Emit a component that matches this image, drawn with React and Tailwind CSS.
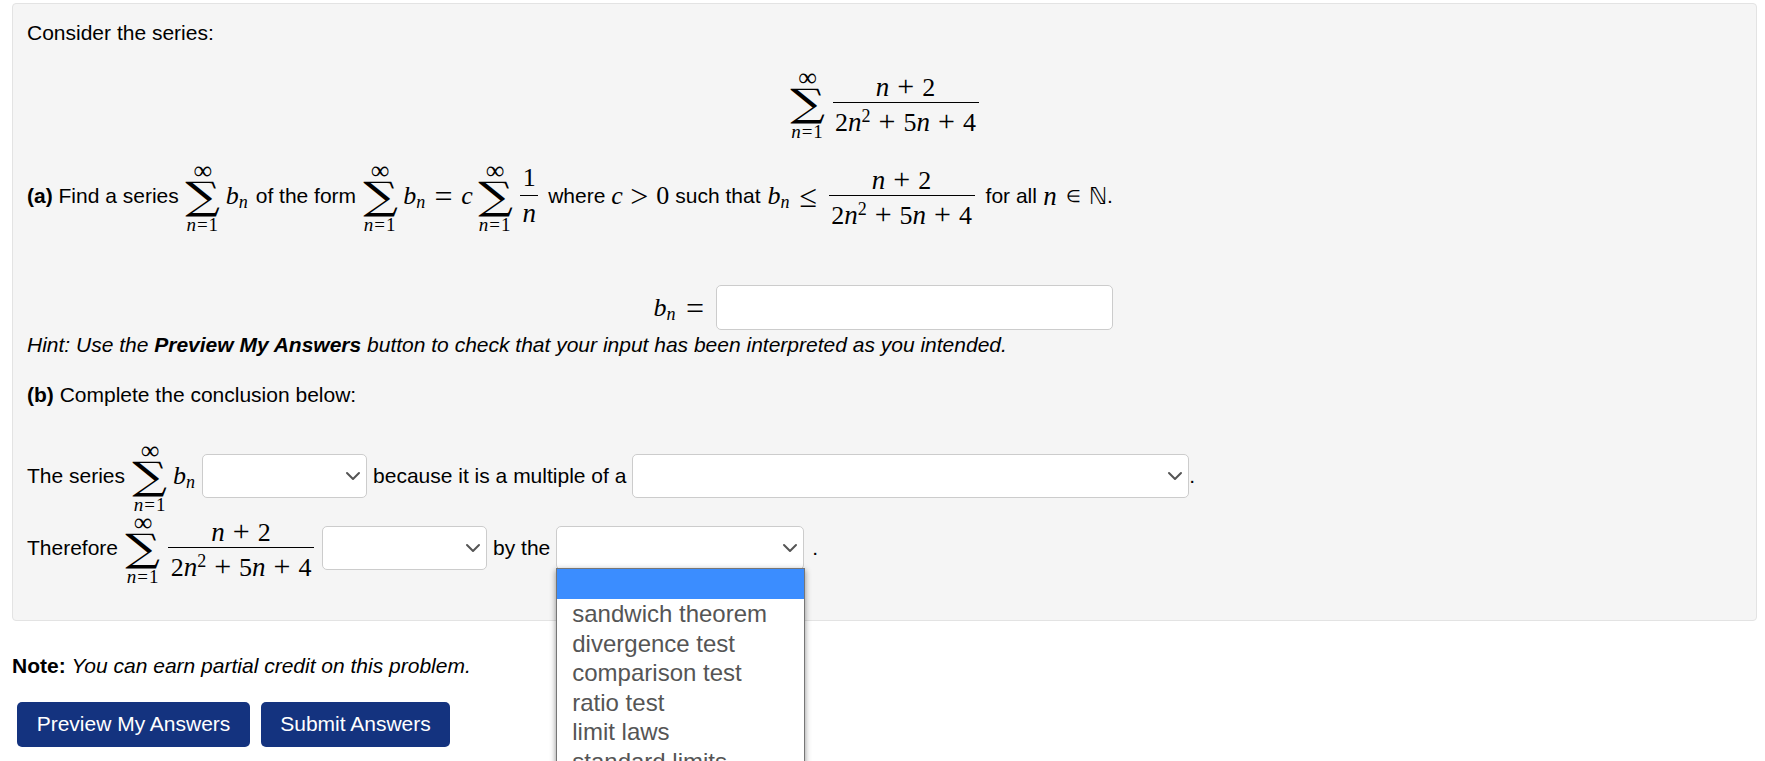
import React from 'react';
import { ChevronDown } from 'lucide-react';

const mathFont = "font-['Liberation_Serif',serif]";

// fixed width math symbol, so the row keeps TeX spacing
const Sym = ({ children, className = '' }) => (
  <span className={`${mathFont} inline-block text-center leading-none ${className}`}>{children}</span>
);

// big sum with limits
const Sum = ({ className = '' }) => (
  <span className={`${mathFont} inline-flex flex-col items-center shrink-0 w-[34px] h-[70px] text-black ${className}`}>
    <span className="h-[20px] text-[26px] leading-[20px]">∞</span>
    <span className="inline-block h-[38px] text-[38px] leading-[31px] scale-x-[1.28] font-['DejaVu_Serif',serif]">∑</span>
    <span className="h-[12px] text-[19px] leading-[12px] tracking-[1px] whitespace-nowrap">
      <i>n</i>=1
    </span>
  </span>
);

const Bn = ({ className = '' }) => (
  <span className={`${mathFont} inline-block w-[21px] text-[26px] leading-none whitespace-nowrap ${className}`}>
    <i>b</i>
    <i className="text-[18px] relative top-[4px]">n</i>
  </span>
);

const Frac = ({ top, bottom, className = '' }) => (
  <span className={`${mathFont} inline-flex flex-col items-center shrink-0 text-[26px] leading-[28px] ${className}`}>
    <span className="whitespace-nowrap h-[31px]">{top}</span>
    <span className="w-full h-px bg-black" />
    <span className="whitespace-nowrap h-[32px] pt-[3px]">{bottom}</span>
  </span>
);

const N = () => <i className="text-[27px]">n</i>;

const Plus = ({ className = 'mx-[8px]' }) => (
  <span className={`text-[30px] leading-none ${className}`}>+</span>
);

const LongFrac = ({ className = '' }) => (
  <Frac
    className={`w-[146px] ${className}`}
    top={
      <>
        <N />
        <Plus />2
      </>
    }
    bottom={
      <>
        2<N />
        <sup className="text-[18px] top-[-9px] leading-none">2</sup>
        <Plus />5<N />
        <Plus />4
      </>
    }
  />
);

const Select = ({ className = '' }) => (
  <span className={`inline-flex items-center justify-end shrink-0 h-[44px] bg-white border border-[#ccc] rounded-[5px] pr-[1px] ${className}`}>
    <ChevronDown size={24} strokeWidth={2} className="text-[#555]" />
  </span>
);

const OPTIONS = ['sandwich theorem', 'divergence test', 'comparison test', 'ratio test', 'limit laws', 'standard limits'];

export default function App() {
  return (
    <div className="relative h-[761px] w-[1765px] overflow-hidden bg-white text-[21px] leading-[28px] text-black font-['Liberation_Sans',Arial,sans-serif]">
      <div className="pl-3 pr-2 pt-[3px]">
        {/* problem panel */}
        <div className="h-[618px] bg-[#f5f5f5] border border-[#e3e3e3] rounded-[4px] px-[14px] pt-[15px]">
          <p className="h-[28px]">Consider the series:</p>

          <div className="flex justify-center items-center h-[75px] mt-[18px]">
            <Sum />
            <LongFrac className="ml-[8px]" />
          </div>

          {/* part a */}
          <div className="flex items-center h-[70px] mt-[21px] whitespace-nowrap">
            <span><b>(a)</b> Find a series</span>
            <Sum className="ml-[7px]" />
            <Bn className="ml-[6px]" />
            <span className="ml-[9px]">of the form</span>
            <Sum className="ml-[7px]" />
            <Bn className="ml-[6px]" />
            <Sym className="w-[19px] ml-[10px] text-[32px]">=</Sym>
            <Sym className="w-[12px] ml-[8px] italic text-[26px]">c</Sym>
            <Sum className="ml-[5px]" />
            <Frac className="w-[18px] ml-[8px]" top="1" bottom={<N />} />
            <span className="ml-[10px]">where</span>
            <Sym className="w-[11px] ml-[6px] italic text-[26px]">c</Sym>
            <Sym className="w-[18px] ml-[8px] text-[32px]">&gt;</Sym>
            <Sym className="w-[12px] ml-[8px] text-[26px]">0</Sym>
            <span className="ml-[7px]">such that</span>
            <Bn className="ml-[7px]" />
            <Sym className="w-[17px] ml-[11px] text-[32px]">≤</Sym>
            <LongFrac className="ml-[12px]" />
            <span className="ml-[11px]">for all</span>
            <Sym className="w-[14px] ml-[6px] italic text-[27px]">n</Sym>
            <Sym className="w-[14px] ml-[9px] text-[17px]">∈</Sym>
            <span className="w-[17px] ml-[9px] text-[23px] font-['DejaVu_Sans',sans-serif]">ℕ</span>
            <span className="ml-[1px]">.</span>
          </div>

          {/* answer row */}
          <div className="flex justify-center items-center h-[45px] mt-[54px] pr-[3px]">
            <Bn />
            <Sym className="w-[19px] ml-[11px] text-[32px]">=</Sym>
            <span className="ml-[11px] w-[397px] h-[45px] bg-white border border-[#ccc] rounded-[5px]" />
          </div>

          <p className="h-[28px] mt-[1px] italic">
            Hint: Use the <b>Preview My Answers</b> button to check that your input has been interpreted as you intended.
          </p>

          <p className="h-[28px] mt-[22px]">
            <b>(b)</b> Complete the conclusion below:
          </p>

          {/* part b */}
          <div className="flex items-center h-[70px] mt-[32px] whitespace-nowrap">
            <span>The series</span>
            <Sum className="ml-[8px]" />
            <Bn className="ml-[6px]" />
            <Select className="w-[165px] ml-[8px]" />
            <span className="ml-[6px]">because it is a multiple of a</span>
            <Select className="w-[557px] ml-[6px]" />
            <span>.</span>
          </div>

          <div className="flex items-center h-[70px] mt-[2px] whitespace-nowrap">
            <span>Therefore</span>
            <Sum className="ml-[8px]" />
            <LongFrac className="ml-[8px]" />
            <Select className="w-[165px] ml-[8px]" />
            <span className="ml-[6px]">by the</span>
            <span className="relative flex ml-[6px]">
              <Select className="w-[248px]" />
              {/* open dropdown list */}
              <span className="absolute left-0 top-[42px] z-10 w-[249px] h-[200px] bg-white border border-[#767676] shadow-[0_2px_6px_rgba(0,0,0,0.45)] text-[24px] leading-[29.5px] text-[#555]">
                <span className="block h-[30px] bg-[#3b8dff]" />
                {OPTIONS.map((opt) => (
                  <span key={opt} className="block pl-[15px]">{opt}</span>
                ))}
              </span>
            </span>
            <span className="ml-[8px]">.</span>
          </div>
        </div>

        <p className="h-[28px] mt-[31px]">
          <b>Note:</b> <i>You can earn partial credit on this problem.</i>
        </p>

        <div className="flex gap-[11px] mt-[22px] pl-[5px]">
          <button className="w-[233px] h-[45px] pb-[1px] bg-[#14337f] text-white rounded-[5px] text-[21px]">Preview My Answers</button>
          <button className="w-[189px] h-[45px] pb-[1px] bg-[#14337f] text-white rounded-[5px] text-[21px]">Submit Answers</button>
        </div>
      </div>
    </div>
  );
}
